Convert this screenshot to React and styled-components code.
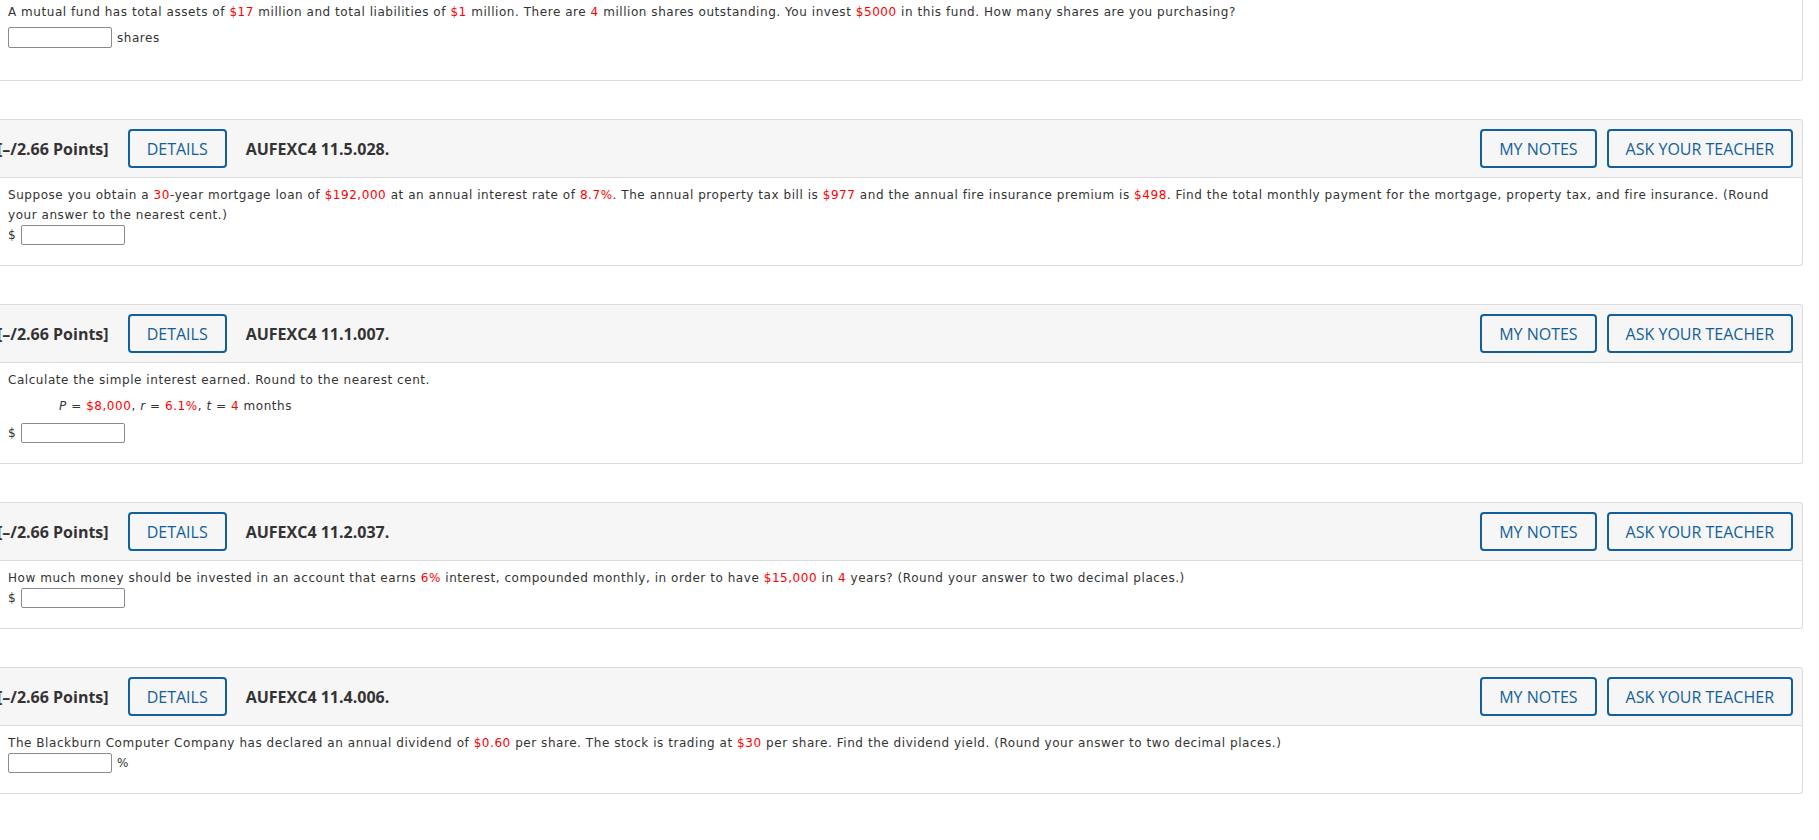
import React from 'react'
import styled, { createGlobalStyle } from 'styled-components'

const GlobalStyle = createGlobalStyle`
  html, body {
    margin: 0;
    padding: 0;
    background: #fff;
    overflow: hidden;
  }
`

const Page = styled.div`
  display: flex;
  flex-direction: column;
  gap: 38px;
  margin: -6px 16px 0 -12px;
`

const Card = styled.section`
  display: flex;
  flex-direction: column;
`

const Header = styled.div`
  display: flex;
  align-items: center;
  height: 39px;
  padding: 9px 9px 9px 9px;
  background: #f6f6f6;
  border: 1px solid #dcdcdc;
  border-radius: 3px 3px 0 0;
  font-family: "Open Sans", "DejaVu Sans", sans-serif;
  color: #333;
`

const Points = styled.span`
  font-size: 16px;
  font-weight: 700;
  margin-left: -1px;
`

const Code = styled.span`
  font-size: 16px;
  font-weight: 700;
  margin-left: 19px;
`

const ActionButton = styled.button`
  box-sizing: border-box;
  height: 39px;
  padding: 0 17px;
  margin-left: ${(p) => p.$gap || 0}px;
  background: transparent;
  border: 2px solid #12609b;
  border-radius: 4px;
  color: #12609b;
  font-family: "Open Sans", "DejaVu Sans", sans-serif;
  font-size: 16px;
  cursor: pointer;
`

const Right = styled.div`
  display: flex;
  gap: 10px;
  margin-left: auto;
`

const Body = styled.div`
  padding: 7px 9px ${(p) => p.$pb || 20}px 19px;
  border: 1px solid #dcdcdc;
  border-top: ${(p) => (p.$top ? '1px solid #dcdcdc' : 'none')};
  border-radius: ${(p) => (p.$top ? '3px' : '0 0 3px 3px')};
  background: #fff;
  font-family: "DejaVu Sans", Verdana, sans-serif;
  font-size: 12px;
  letter-spacing: 0.55px;
  line-height: 20px;
  color: #333;
`

const Question = styled.div``

const Red = styled.span`
  color: #f00;
`

const Var = styled.i`
  font-style: italic;
`

const Formula = styled.div`
  margin: 6px 0 7px 51px;
`

const AnswerRow = styled.div`
  display: flex;
  align-items: center;
  height: ${(p) => p.$h || 20}px;
  margin-top: ${(p) => p.$mt || 0}px;
`

const Input = styled.input`
  box-sizing: border-box;
  width: 104px;
  height: ${(p) => p.$h || 20}px;
  margin: 0 0 0 ${(p) => p.$ml || 0}px;
  padding: 0 4px;
  border: 1px solid #8a8a8a;
  border-radius: 2px;
  background: #fff;
`

const Unit = styled.span`
  margin-left: 5px;
`

const QHeader = ({ code }) => (
  <Header>
    <Points>[–/2.66 Points]</Points>
    <ActionButton $gap={19}>DETAILS</ActionButton>
    <Code>{code}</Code>
    <Right>
      <ActionButton>MY NOTES</ActionButton>
      <ActionButton>ASK YOUR TEACHER</ActionButton>
    </Right>
  </Header>
)

export default function App() {
  return (
    <>
      <GlobalStyle />
      <Page>
        <Card>
          <Body $top $pb={32}>
            <Question>
              A mutual fund has total assets of <Red>$17</Red> million and total liabilities of <Red>$1</Red> million. There are <Red>4</Red> million shares outstanding. You invest <Red>$5000</Red> in this fund. How many shares are you purchasing?
            </Question>
            <AnswerRow $h={21} $mt={5}>
              <Input $h={21} />
              <Unit>shares</Unit>
            </AnswerRow>
          </Body>
        </Card>

        <Card>
          <QHeader code="AUFEXC4 11.5.028." />
          <Body>
            <Question>
              Suppose you obtain a <Red>30</Red>-year mortgage loan of <Red>$192,000</Red> at an annual interest rate of <Red>8.7%</Red>. The annual property tax bill is <Red>$977</Red> and the annual fire insurance premium is <Red>$498</Red>. Find the total monthly payment for the mortgage, property tax, and fire insurance. (Round your answer to the nearest cent.)
            </Question>
            <AnswerRow>
              $<Input $ml={5} />
            </AnswerRow>
          </Body>
        </Card>

        <Card>
          <QHeader code="AUFEXC4 11.1.007." />
          <Body>
            <Question>Calculate the simple interest earned. Round to the nearest cent.</Question>
            <Formula>
              <Var>P</Var> = <Red>$8,000</Red>, <Var>r</Var> = <Red>6.1%</Red>, <Var>t</Var> = <Red>4</Red> months
            </Formula>
            <AnswerRow>
              $<Input $ml={5} />
            </AnswerRow>
          </Body>
        </Card>

        <Card>
          <QHeader code="AUFEXC4 11.2.037." />
          <Body>
            <Question>
              How much money should be invested in an account that earns <Red>6%</Red> interest, compounded monthly, in order to have <Red>$15,000</Red> in <Red>4</Red> years? (Round your answer to two decimal places.)
            </Question>
            <AnswerRow>
              $<Input $ml={5} />
            </AnswerRow>
          </Body>
        </Card>

        <Card>
          <QHeader code="AUFEXC4 11.4.006." />
          <Body>
            <Question>
              The Blackburn Computer Company has declared an annual dividend of <Red>$0.60</Red> per share. The stock is trading at <Red>$30</Red> per share. Find the dividend yield. (Round your answer to two decimal places.)
            </Question>
            <AnswerRow>
              <Input />
              <Unit>%</Unit>
            </AnswerRow>
          </Body>
        </Card>
      </Page>
    </>
  )
}
